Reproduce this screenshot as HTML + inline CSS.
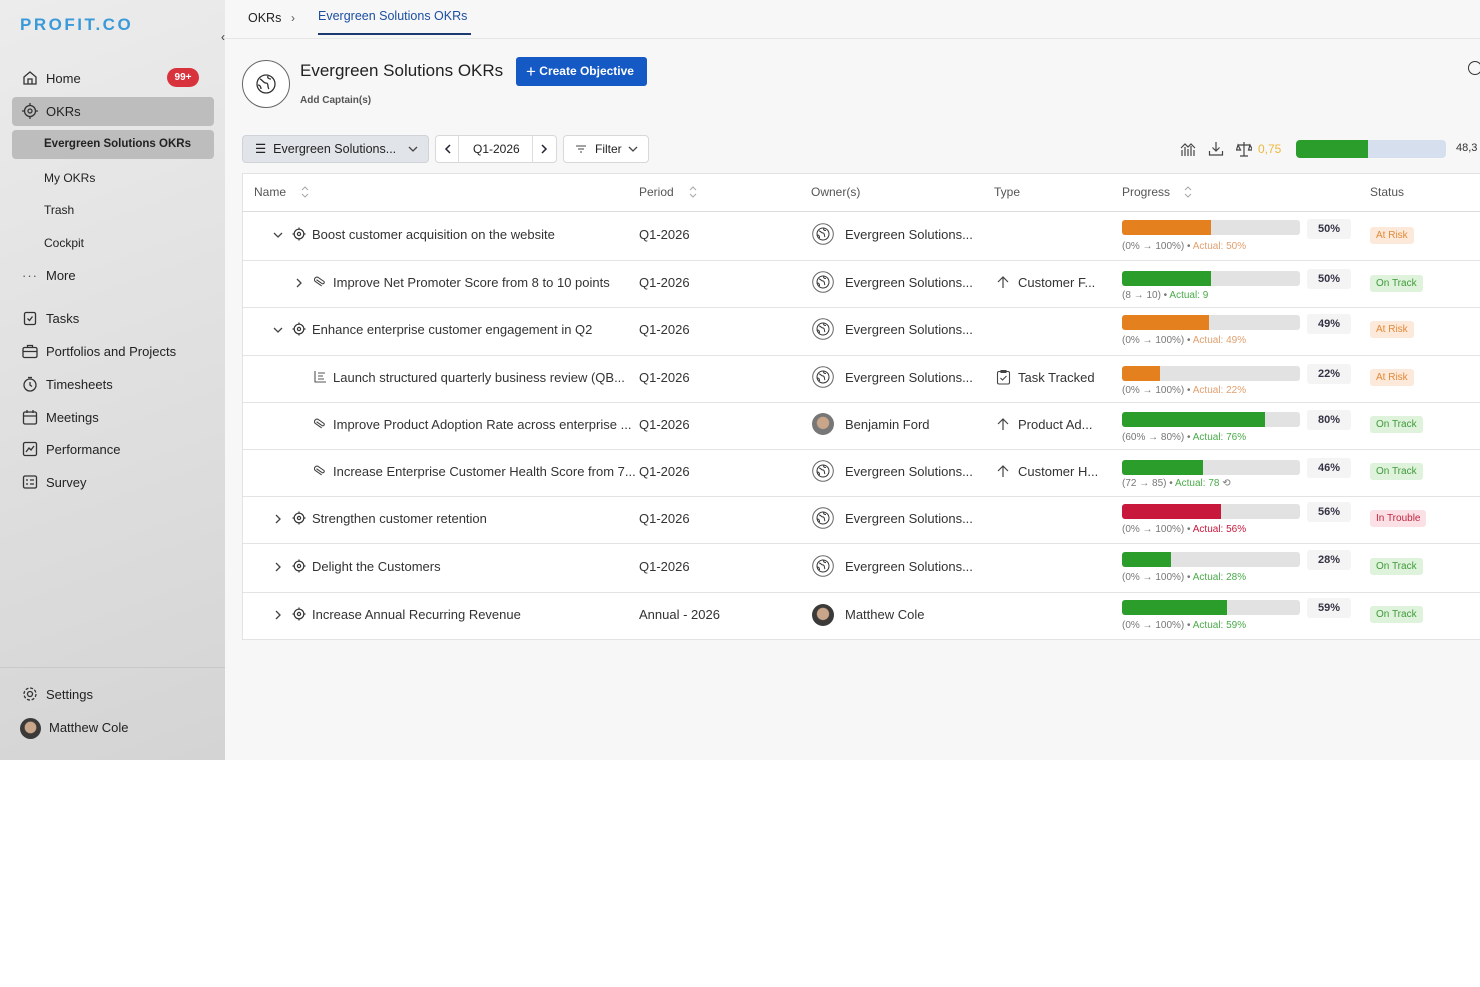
<!DOCTYPE html>
<html><head><meta charset="utf-8"><style>
*{box-sizing:border-box;margin:0;padding:0}
body{width:1480px;height:987px;background:#fff;font-family:"Liberation Sans",sans-serif;color:#222;position:relative;overflow:hidden}
.a{position:absolute}
#sb{left:0;top:0;width:225px;height:760px;background:linear-gradient(160deg,#ececec,#d4d4d4)}
#main{left:225px;top:0;width:1255px;height:760px;background:#f7f7f8}
.nav{position:absolute;left:22px;font-size:13px;color:#222;display:flex;align-items:center;gap:8px}
.sub{position:absolute;left:44px;font-size:12px;color:#222}
.t13{font-size:13px;color:#333}
.bar{position:absolute;left:1122px;width:178px;height:15px;border-radius:3px;background:#e2e2e2;overflow:hidden}
.bar i{display:block;height:100%}
.pct{position:absolute;left:1307px;width:44px;height:20px;background:#f4f4f5;border-radius:3px;font-size:11px;font-weight:bold;color:#334;text-align:center;line-height:20px}
.meta{position:absolute;left:1122px;font-size:10px;color:#777}
.badge{position:absolute;left:1370px;height:17px;padding:0 6px;font-size:10px;line-height:17px;border-radius:3px}
.risk{background:#fde9d9;color:#e08a3a}
.track{background:#dff2dc;color:#3f9a3a}
.trouble{background:#fbe0e6;color:#c2253f}
.gl{position:absolute;left:812px}
.tg{position:absolute;left:292px}
.ch{position:absolute}
</style></head><body>
<svg width="0" height="0" style="position:absolute"><defs>
<symbol id="globe" viewBox="0 0 22 22"><circle cx="11" cy="11" r="10.3" fill="#fff" stroke="#666" stroke-width="1"/><circle cx="11" cy="11" r="6" fill="none" stroke="#333" stroke-width="1"/><path d="M7 8c2 0 2 2 4 2s1 3 2 4M12 5.5c-1 1 0 2 2 2M5.5 12c1 0 2 1 2 3" fill="none" stroke="#333" stroke-width="1"/></symbol>
<symbol id="tgt" viewBox="0 0 14 14"><circle cx="7" cy="7" r="4.8" fill="none" stroke="#333" stroke-width="1.2"/><circle cx="7" cy="7" r="1.6" fill="none" stroke="#333" stroke-width="1.2"/><path d="M7 0.5v2M7 11.5v2M0.5 7h2M11.5 7h2" stroke="#333" stroke-width="1.2"/></symbol>
<symbol id="clip" viewBox="0 0 14 14"><path d="M3 4l5 5a1.5 1.5 0 0 0 2-2L5 2a2.5 2.5 0 0 0-3.5 3.5l5.5 5.5" fill="none" stroke="#444" stroke-width="1.1" transform="rotate(-10 7 7)"/></symbol>
<symbol id="down" viewBox="0 0 12 12"><path d="M2 4l4 4 4-4" fill="none" stroke="#444" stroke-width="1.3"/></symbol>
<symbol id="right" viewBox="0 0 12 12"><path d="M4 2l4 4-4 4" fill="none" stroke="#444" stroke-width="1.3"/></symbol>
<symbol id="up" viewBox="0 0 14 14"><path d="M7 13V2M2 7l5-5 5 5" fill="none" stroke="#444" stroke-width="1.2"/></symbol>
<symbol id="sort" viewBox="0 0 10 14"><path d="M2 5l3-3 3 3M2 9l3 3 3-3" fill="none" stroke="#aaa" stroke-width="1.1"/></symbol>
</defs></svg>
<div id="sb" class="a">
 <div class="a" style="left:20px;top:15px;font-size:17px;font-weight:bold;letter-spacing:2.5px;color:#3a9ad9">PROFIT.CO</div>
 <div class="nav" style="top:70px"><svg width="16" height="16" viewBox="0 0 16 16" fill="none" stroke="#333" stroke-width="1.3"><path d="M2 7L8 2l6 5v7H2z M6 14V9h4v5"/></svg>Home</div>
 <div class="a" style="left:167px;top:68px;width:32px;height:19px;background:#d8323c;border-radius:10px;color:#fff;font-size:10px;text-align:center;line-height:19px;font-weight:bold">99+</div>
 <div class="a" style="left:12px;top:97px;width:202px;height:29px;background:#bdbdbd;border-radius:4px"></div>
 <div class="nav" style="top:103px"><svg width="16" height="16" viewBox="0 0 16 16" fill="none" stroke="#333" stroke-width="1.3"><circle cx="8" cy="8" r="5.5"/><circle cx="8" cy="8" r="2"/><path d="M8 0v3M8 13v3M0 8h3M13 8h3"/></svg>OKRs</div>
 <div class="a" style="left:12px;top:130px;width:202px;height:29px;background:#bdbdbd;border-radius:4px"></div>
 <div class="sub" style="top:138px;font-weight:bold;font-size:11.5px">Evergreen Solutions OKRs</div>
 <div class="sub" style="top:171px">My OKRs</div>
 <div class="sub" style="top:203px">Trash</div>
 <div class="sub" style="top:236px">Cockpit</div>
 <div class="nav" style="top:268px"><span style="width:16px;letter-spacing:1px;color:#555">···</span>More</div>
 <div class="nav" style="top:310px"><svg width="16" height="16" viewBox="0 0 16 16" fill="none" stroke="#333" stroke-width="1.3"><rect x="2.5" y="2.5" width="11" height="12" rx="1.5"/><path d="M5.5 8.5l2 2 3-4"/></svg>Tasks</div>
 <div class="nav" style="top:343px"><svg width="16" height="16" viewBox="0 0 16 16" fill="none" stroke="#333" stroke-width="1.3"><rect x="1" y="4.5" width="14" height="10" rx="1.5"/><path d="M5.5 4.5V2.5h5v2M1 8.5h14"/></svg>Portfolios and Projects</div>
 <div class="nav" style="top:376px"><svg width="16" height="16" viewBox="0 0 16 16" fill="none" stroke="#333" stroke-width="1.3"><circle cx="8" cy="9" r="6"/><path d="M8 6v3l2 1.5M6 1.5h4"/></svg>Timesheets</div>
 <div class="nav" style="top:409px"><svg width="16" height="16" viewBox="0 0 16 16" fill="none" stroke="#333" stroke-width="1.3"><rect x="1.5" y="3" width="13" height="12" rx="1.5"/><path d="M1.5 7h13M5 1v3M11 1v3"/></svg>Meetings</div>
 <div class="nav" style="top:441px"><svg width="16" height="16" viewBox="0 0 16 16" fill="none" stroke="#333" stroke-width="1.3"><rect x="1.5" y="1.5" width="13" height="13" rx="1.5"/><path d="M4 11l3-4 2 2 3-4"/></svg>Performance</div>
 <div class="nav" style="top:474px"><svg width="16" height="16" viewBox="0 0 16 16" fill="none" stroke="#333" stroke-width="1.3"><rect x="1.5" y="2" width="13" height="12" rx="1.5"/><path d="M4 6h2M8 6h4M4 10h2M8 10h4"/></svg>Survey</div>
 <div class="a" style="left:0;top:667px;width:225px;border-top:1px solid #c8c8c8"></div>
 <div class="nav" style="top:686px"><svg width="16" height="16" viewBox="0 0 16 16" fill="none" stroke="#333" stroke-width="1.3"><circle cx="8" cy="8" r="2.5"/><circle cx="8" cy="8" r="6" stroke-dasharray="3 1.7"/></svg>Settings</div>
 <div class="a" style="left:20px;top:718px;width:21px;height:21px;border-radius:50%;background:radial-gradient(circle at 50% 45%,#c9a58a 35%,#3b3a38 40%)"></div>
 <div class="a" style="left:49px;top:720px;font-size:13px">Matthew Cole</div>
</div>
<div id="main" class="a"></div>
<div class="a" style="left:221px;top:30px;font-size:12px;color:#333">‹</div>
<div class="a" style="left:248px;top:11px;font-size:12.5px;color:#222">OKRs</div>
<div class="a" style="left:291px;top:11px;font-size:12px;color:#555">›</div>
<div class="a" style="left:318px;top:9px;font-size:12.5px;color:#1c4fa0">Evergreen Solutions OKRs</div>
<div class="a" style="left:318px;top:33px;width:153px;height:2px;background:#1c3a70"></div>
<div class="a" style="left:225px;top:38px;width:1255px;border-top:1px solid #e6e6e6"></div>
<div class="a" style="left:242px;top:60px;width:48px;height:48px;border:1px solid #666;border-radius:50%;background:#fff"></div>
<svg class="a" style="left:255px;top:73px" width="22" height="22" viewBox="0 0 22 22" fill="none" stroke="#333" stroke-width="1.3"><circle cx="11" cy="11" r="9"/><path d="M5 6c3 1 3 4 6 4s1 4 3 6M13 3c-1 2 1 3 3 3M3 12c2 0 3 2 3 4"/></svg>
<div class="a" style="left:300px;top:61px;font-size:17px;color:#222">Evergreen Solutions OKRs</div>
<div class="a" style="left:516px;top:57px;width:131px;height:29px;background:#1459c4;border-radius:3px;color:#fff;font-size:12px;font-weight:bold;line-height:29px;padding-left:10px"><span style="font-size:17px;font-weight:normal;vertical-align:-2px">+</span> Create Objective</div>
<div class="a" style="left:300px;top:95px;font-size:10px;color:#555;font-weight:bold">Add Captain(s)</div>
<div class="a" style="left:1468px;top:61px;width:14px;height:14px;border:1.3px solid #333;border-radius:50%"></div>
<div class="a" style="left:242px;top:135px;width:187px;height:28px;background:#e1e4e8;border:1px solid #cfd3d8;border-radius:4px;font-size:12.5px;line-height:26px;padding-left:12px">☰&nbsp; Evergreen Solutions...</div>
<svg class="a" style="left:407px;top:143px" width="12" height="12"><use href="#down"/></svg>
<div class="a" style="left:435px;top:135px;width:122px;height:28px;background:#fff;border:1px solid #d8d8d8;border-radius:4px;font-size:12px;line-height:26px"><svg class="a" style="left:6px;top:7px" width="12" height="12" viewBox="0 0 12 12"><path d="M8 2L4 6l4 4" fill="none" stroke="#223" stroke-width="1.5"/></svg><span class="a" style="left:22px;top:-1px;height:28px;border-left:1px solid #ddd"></span><span class="a" style="left:37px">Q1-2026</span><span class="a" style="left:96px;top:-1px;height:28px;border-left:1px solid #ddd"></span><svg class="a" style="left:102px;top:7px" width="12" height="12" viewBox="0 0 12 12"><path d="M4 2l4 4-4 4" fill="none" stroke="#223" stroke-width="1.5"/></svg></div>
<div class="a" style="left:563px;top:135px;width:86px;height:28px;background:#fff;border:1px solid #d8d8d8;border-radius:4px;font-size:12px;line-height:26px;padding-left:31px">Filter</div>
<svg class="a" style="left:575px;top:143px" width="12" height="12" viewBox="0 0 12 12"><path d="M1 3h10M3 6h6M5 9h2" stroke="#444" stroke-width="1.1"/></svg>
<svg class="a" style="left:627px;top:143px" width="12" height="12"><use href="#down"/></svg>
<svg class="a" style="left:1180px;top:141px" width="16" height="16" viewBox="0 0 16 16" fill="none" stroke="#444" stroke-width="1.2"><path d="M2 15V9M5 15V6M8 15V8M11 15V5M14 15V9M1 7l4-4 3 3 3-3 4 4"/></svg>
<svg class="a" style="left:1208px;top:141px" width="16" height="16" viewBox="0 0 16 16" fill="none" stroke="#444" stroke-width="1.2"><path d="M8 1v9M4.5 6.5L8 10l3.5-3.5M1.5 10v4h13v-4"/></svg>
<svg class="a" style="left:1236px;top:141px" width="16" height="16" viewBox="0 0 16 16" fill="none" stroke="#444" stroke-width="1.2"><path d="M8 1v14M4 15h8M2 4h12M2 4l-1.5 5h4zM14 4l-1.5 5h4z"/></svg>
<div class="a" style="left:1258px;top:142px;font-size:12px;color:#f0b83a">0,75</div>
<div class="a" style="left:1296px;top:140px;width:150px;height:18px;background:#d5dfee;border-radius:4px;overflow:hidden"><div style="width:72px;height:100%;background:#2a9d2a"></div></div>
<div class="a" style="left:1456px;top:142px;font-size:11px;color:#333">48,3</div>
<div class="a" style="left:242px;top:173px;width:1238px;height:467px;background:#fff;border:1px solid #e3e3e3;border-right:none"></div>
<div class="a t13" style="left:254px;top:185px;font-size:12px;color:#555">Name</div><svg class="a" style="left:300px;top:185px" width="10" height="14"><use href="#sort"/></svg>
<div class="a t13" style="left:639px;top:185px;font-size:12px;color:#555">Period</div><svg class="a" style="left:688px;top:185px" width="10" height="14"><use href="#sort"/></svg>
<div class="a t13" style="left:811px;top:185px;font-size:12px;color:#555">Owner(s)</div>
<div class="a t13" style="left:994px;top:185px;font-size:12px;color:#555">Type</div>
<div class="a t13" style="left:1122px;top:185px;font-size:12px;color:#555">Progress</div><svg class="a" style="left:1183px;top:185px" width="10" height="14"><use href="#sort"/></svg>
<div class="a t13" style="left:1370px;top:185px;font-size:12px;color:#555">Status</div>
<div class="a" style="left:242px;top:211px;width:1238px;border-top:1px solid #ddd"></div>

<div class="a" style="left:242px;top:260px;width:1238px;border-top:1px solid #e3e3e3"></div>
<div class="a" style="left:242px;top:307px;width:1238px;border-top:1px solid #e3e3e3"></div>
<div class="a" style="left:242px;top:355px;width:1238px;border-top:1px solid #e3e3e3"></div>
<div class="a" style="left:242px;top:402px;width:1238px;border-top:1px solid #e3e3e3"></div>
<div class="a" style="left:242px;top:449px;width:1238px;border-top:1px solid #e3e3e3"></div>
<div class="a" style="left:242px;top:496px;width:1238px;border-top:1px solid #e3e3e3"></div>
<div class="a" style="left:242px;top:543px;width:1238px;border-top:1px solid #e3e3e3"></div>
<div class="a" style="left:242px;top:592px;width:1238px;border-top:1px solid #e3e3e3"></div>

<!-- row1 -->
<svg class="ch" style="left:272px;top:229px" width="12" height="12"><use href="#down"/></svg><svg class="tg" style="top:227px" width="14" height="14"><use href="#tgt"/></svg><div class="a t13" style="left:312px;top:227px">Boost customer acquisition on the website</div>
<div class="a t13" style="left:639px;top:227px">Q1-2026</div><svg class="gl" style="top:223px" width="22" height="22"><use href="#globe"/></svg><div class="a t13" style="left:845px;top:227px">Evergreen Solutions...</div>
<div class="bar" style="top:220px"><i style="width:89px;background:#e5801f"></i></div><div class="pct" style="top:219px">50%</div><div class="meta" style="top:241px">(0% → 100%) • <span style="color:#e0a070">Actual: 50%</span></div><div class="badge risk" style="top:227px">At Risk</div>
<!-- row2 -->
<svg class="ch" style="left:293px;top:277px" width="12" height="12"><use href="#right"/></svg><svg class="a" style="left:314px;top:275px" width="14" height="14"><use href="#clip"/></svg><div class="a t13" style="left:333px;top:275px">Improve Net Promoter Score from 8 to 10 points</div>
<div class="a t13" style="left:639px;top:275px">Q1-2026</div><svg class="gl" style="top:271px" width="22" height="22"><use href="#globe"/></svg><div class="a t13" style="left:845px;top:275px">Evergreen Solutions...</div><svg class="a" style="left:996px;top:275px" width="14" height="14"><use href="#up"/></svg><div class="a t13" style="left:1018px;top:275px">Customer F...</div>
<div class="bar" style="top:271px"><i style="width:89px;background:#2a9d2a"></i></div><div class="pct" style="top:269px">50%</div><div class="meta" style="top:290px">(8 → 10) • <span style="color:#4aaa4a">Actual: 9</span></div><div class="badge track" style="top:275px">On Track</div>
<!-- row3 -->
<svg class="ch" style="left:272px;top:324px" width="12" height="12"><use href="#down"/></svg><svg class="tg" style="top:322px" width="14" height="14"><use href="#tgt"/></svg><div class="a t13" style="left:312px;top:322px">Enhance enterprise customer engagement in Q2</div>
<div class="a t13" style="left:639px;top:322px">Q1-2026</div><svg class="gl" style="top:318px" width="22" height="22"><use href="#globe"/></svg><div class="a t13" style="left:845px;top:322px">Evergreen Solutions...</div>
<div class="bar" style="top:315px"><i style="width:87px;background:#e5801f"></i></div><div class="pct" style="top:314px">49%</div><div class="meta" style="top:335px">(0% → 100%) • <span style="color:#e0a070">Actual: 49%</span></div><div class="badge risk" style="top:321px">At Risk</div>
<!-- row4 -->
<svg class="a" style="left:314px;top:370px" width="13" height="13" viewBox="0 0 13 13" fill="none" stroke="#555" stroke-width="1.1"><path d="M1 1v11h11M4 3h7M4 6h5M4 9h6"/></svg><div class="a t13" style="left:333px;top:370px">Launch structured quarterly business review (QB...</div>
<div class="a t13" style="left:639px;top:370px">Q1-2026</div><svg class="gl" style="top:366px" width="22" height="22"><use href="#globe"/></svg><div class="a t13" style="left:845px;top:370px">Evergreen Solutions...</div>
<svg class="a" style="left:996px;top:369px" width="15" height="16" viewBox="0 0 15 16" fill="none" stroke="#444" stroke-width="1.1"><rect x="1.5" y="2.5" width="12" height="12.5" rx="1.5"/><path d="M5 1.5h5v2H5zM4.5 9l2 2 4-4"/></svg><div class="a t13" style="left:1018px;top:370px">Task Tracked</div>
<div class="bar" style="top:366px"><i style="width:38px;background:#e5801f"></i></div><div class="pct" style="top:364px">22%</div><div class="meta" style="top:385px">(0% → 100%) • <span style="color:#e0a070">Actual: 22%</span></div><div class="badge risk" style="top:369px">At Risk</div>
<!-- row5 -->
<svg class="a" style="left:314px;top:417px" width="14" height="14"><use href="#clip"/></svg><div class="a t13" style="left:333px;top:417px">Improve Product Adoption Rate across enterprise ...</div>
<div class="a t13" style="left:639px;top:417px">Q1-2026</div><div class="a" style="left:812px;top:413px;width:22px;height:22px;border-radius:50%;background:radial-gradient(circle at 50% 45%,#c9a58a 35%,#777 40%)"></div><div class="a t13" style="left:845px;top:417px">Benjamin Ford</div><svg class="a" style="left:996px;top:417px" width="14" height="14"><use href="#up"/></svg><div class="a t13" style="left:1018px;top:417px">Product Ad...</div>
<div class="bar" style="top:412px"><i style="width:143px;background:#2a9d2a"></i></div><div class="pct" style="top:410px">80%</div><div class="meta" style="top:432px">(60% → 80%) • <span style="color:#4aaa4a">Actual: 76%</span></div><div class="badge track" style="top:416px">On Track</div>
<!-- row6 -->
<svg class="a" style="left:314px;top:464px" width="14" height="14"><use href="#clip"/></svg><div class="a t13" style="left:333px;top:464px">Increase Enterprise Customer Health Score from 7...</div>
<div class="a t13" style="left:639px;top:464px">Q1-2026</div><svg class="gl" style="top:460px" width="22" height="22"><use href="#globe"/></svg><div class="a t13" style="left:845px;top:464px">Evergreen Solutions...</div><svg class="a" style="left:996px;top:464px" width="14" height="14"><use href="#up"/></svg><div class="a t13" style="left:1018px;top:464px">Customer H...</div>
<div class="bar" style="top:460px"><i style="width:81px;background:#2a9d2a"></i></div><div class="pct" style="top:458px">46%</div><div class="meta" style="top:478px">(72 → 85) • <span style="color:#4aaa4a">Actual: 78</span> ⟲</div><div class="badge track" style="top:463px">On Track</div>
<!-- row7 -->
<svg class="ch" style="left:272px;top:513px" width="12" height="12"><use href="#right"/></svg><svg class="tg" style="top:511px" width="14" height="14"><use href="#tgt"/></svg><div class="a t13" style="left:312px;top:511px">Strengthen customer retention</div>
<div class="a t13" style="left:639px;top:511px">Q1-2026</div><svg class="gl" style="top:507px" width="22" height="22"><use href="#globe"/></svg><div class="a t13" style="left:845px;top:511px">Evergreen Solutions...</div>
<div class="bar" style="top:504px"><i style="width:99px;background:#c8193c"></i></div><div class="pct" style="top:502px">56%</div><div class="meta" style="top:524px">(0% → 100%) • <span style="color:#c8193c">Actual: 56%</span></div><div class="badge trouble" style="top:510px">In Trouble</div>
<!-- row8 -->
<svg class="ch" style="left:272px;top:561px" width="12" height="12"><use href="#right"/></svg><svg class="tg" style="top:559px" width="14" height="14"><use href="#tgt"/></svg><div class="a t13" style="left:312px;top:559px">Delight the Customers</div>
<div class="a t13" style="left:639px;top:559px">Q1-2026</div><svg class="gl" style="top:555px" width="22" height="22"><use href="#globe"/></svg><div class="a t13" style="left:845px;top:559px">Evergreen Solutions...</div>
<div class="bar" style="top:552px"><i style="width:49px;background:#2a9d2a"></i></div><div class="pct" style="top:550px">28%</div><div class="meta" style="top:572px">(0% → 100%) • <span style="color:#4aaa4a">Actual: 28%</span></div><div class="badge track" style="top:558px">On Track</div>
<!-- row9 -->
<svg class="ch" style="left:272px;top:609px" width="12" height="12"><use href="#right"/></svg><svg class="tg" style="top:607px" width="14" height="14"><use href="#tgt"/></svg><div class="a t13" style="left:312px;top:607px">Increase Annual Recurring Revenue</div>
<div class="a t13" style="left:639px;top:607px">Annual - 2026</div><div class="a" style="left:812px;top:604px;width:22px;height:22px;border-radius:50%;background:radial-gradient(circle at 50% 45%,#c9a58a 35%,#3b3a38 40%)"></div><div class="a t13" style="left:845px;top:607px">Matthew Cole</div>
<div class="bar" style="top:600px"><i style="width:105px;background:#2a9d2a"></i></div><div class="pct" style="top:598px">59%</div><div class="meta" style="top:620px">(0% → 100%) • <span style="color:#4aaa4a">Actual: 59%</span></div><div class="badge track" style="top:606px">On Track</div>
</body></html>
